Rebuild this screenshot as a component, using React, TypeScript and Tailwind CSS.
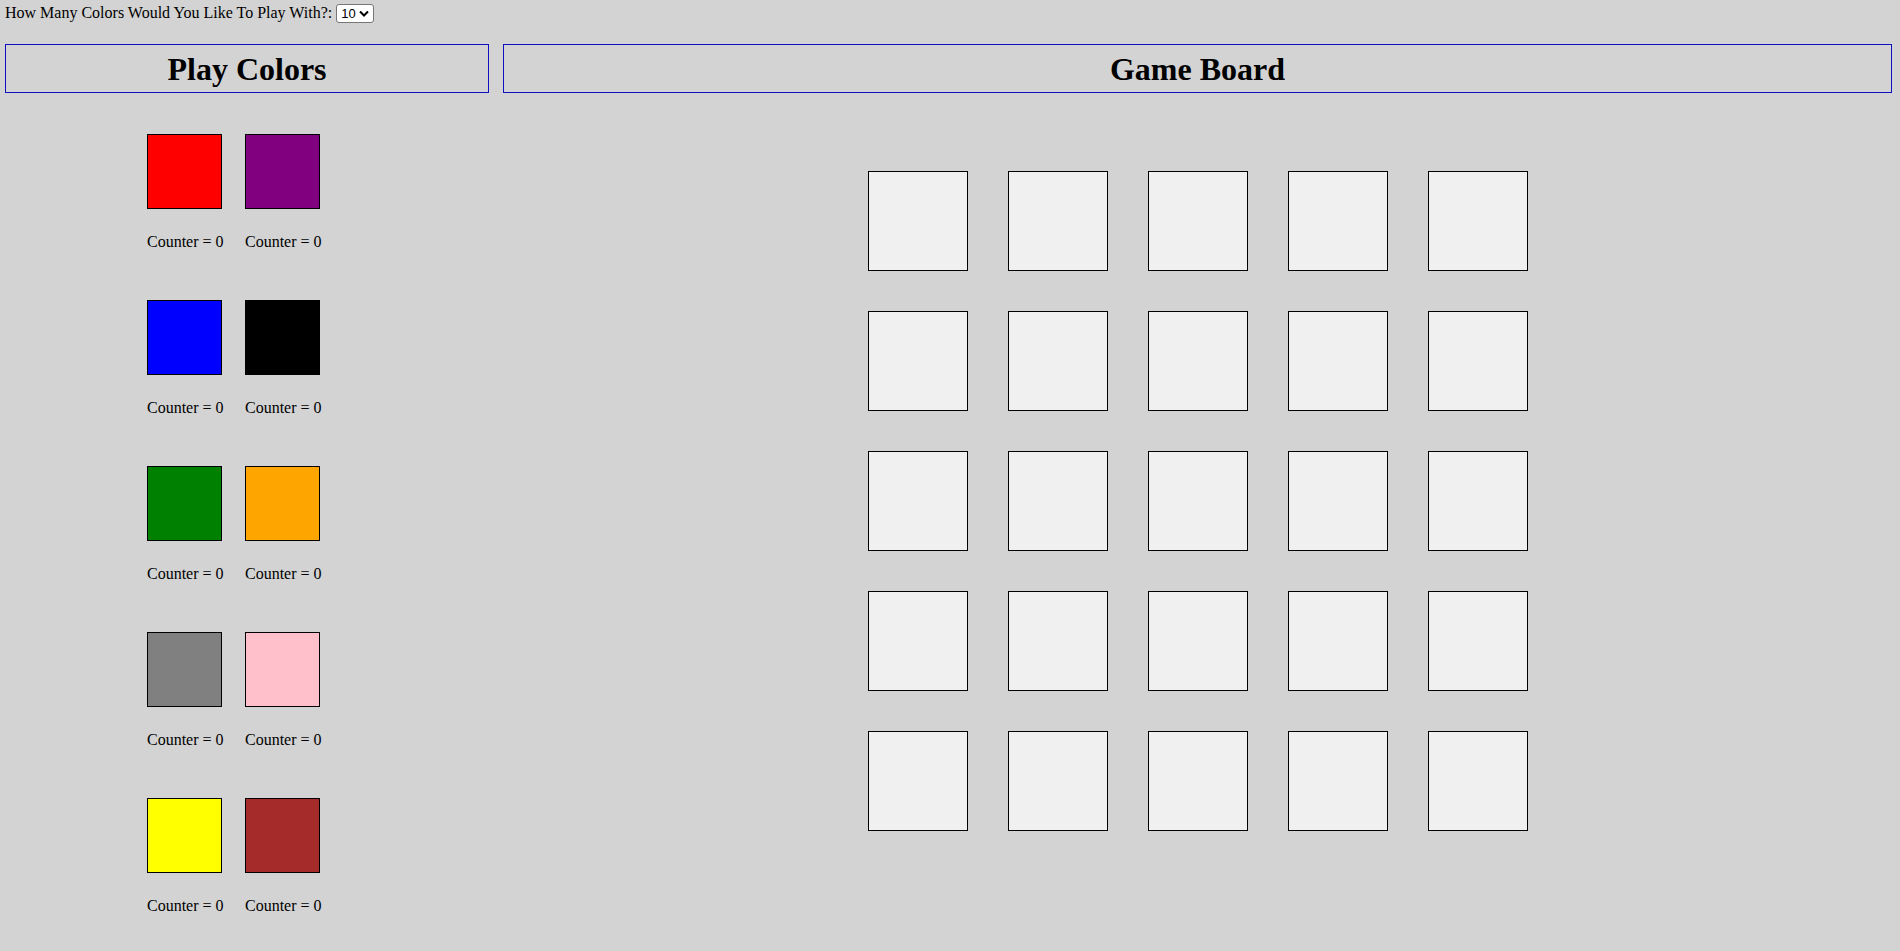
import { useState } from "react";

const playColors = [
  { name: "red", className: "bg-[#ff0000]" },
  { name: "purple", className: "bg-[#800080]" },
  { name: "blue", className: "bg-[#0000ff]" },
  { name: "black", className: "bg-[#000000]" },
  { name: "green", className: "bg-[#008000]" },
  { name: "orange", className: "bg-[#ffa500]" },
  { name: "gray", className: "bg-[#808080]" },
  { name: "pink", className: "bg-[#ffc0cb]" },
  { name: "yellow", className: "bg-[#ffff00]" },
  { name: "brown", className: "bg-[#a52a2a]" },
];

const BOARD_SIZE = 25;

export default function App() {
  const [colorCount, setColorCount] = useState("10");
  const [counters] = useState<number[]>(playColors.map(() => 0));

  return (
    <div className="min-h-screen bg-[#d3d3d3] pl-[5px] pr-[8px] pt-[3px] font-['Liberation_Serif',serif] text-[16px] text-black">
      <div className="flex h-[20px] items-center leading-[18px]">
        <span>How Many Colors Would You Like To Play With?:</span>
        <ColorSelect value={colorCount} onChange={setColorCount} />
      </div>

      <div className="mt-[21px] flex gap-[14px]">
        {/* left: palette */}
        <section className="w-[484px] shrink-0">
          <SectionTitle title="Play Colors" />
          <div className="mt-[41px] grid grid-cols-[76px_76px] gap-x-[22px] gap-y-[49px] pl-[142px]">
            {playColors.map((c, i) => (
              <div key={c.name} className="flex flex-col">
                <div
                  className={`h-[75px] w-[75px] border border-black ${c.className}`}
                  aria-label={c.name}
                />
                <p className="mt-[24px] whitespace-nowrap leading-[18px]">
                  Counter = {counters[i]}
                </p>
              </div>
            ))}
          </div>
        </section>

        {/* right: board */}
        <section className="min-w-0 flex-1">
          <SectionTitle title="Game Board" />
          <div className="mt-[78px] grid grid-cols-[repeat(5,100px)] justify-center gap-[40px]">
            {Array.from({ length: BOARD_SIZE }).map((_, i) => (
              <div
                key={i}
                className="h-[100px] w-[100px] border border-black bg-[#f0f0f0]"
              />
            ))}
          </div>
        </section>
      </div>
    </div>
  );
}

function SectionTitle({ title }: { title: string }) {
  return (
    <h1 className="flex h-[49px] items-center justify-center border border-[#1010c0] text-[32px] font-bold leading-none">
      {title}
    </h1>
  );
}

function ColorSelect({
  value,
  onChange,
}: {
  value: string;
  onChange: (v: string) => void;
}) {
  return (
    <span className="relative ml-[4px] inline-flex h-[19px] w-[38px]">
      <select
        value={value}
        onChange={(e) => onChange(e.target.value)}
        className="h-full w-full appearance-none rounded-[3px] border border-[#767676] bg-white pl-[4px] font-['Liberation_Sans',Arial,sans-serif] text-[13px] leading-[17px]"
      >
        {["2", "4", "6", "8", "10"].map((n) => (
          <option key={n} value={n}>
            {n}
          </option>
        ))}
      </select>
      <svg
        className="pointer-events-none absolute right-[5px] top-[6px]"
        width="10"
        height="7"
        viewBox="0 0 10 7"
        aria-hidden
      >
        <path d="M1 1.5 L5 5.5 L9 1.5" fill="none" stroke="#000" strokeWidth="2" />
      </svg>
    </span>
  );
}
